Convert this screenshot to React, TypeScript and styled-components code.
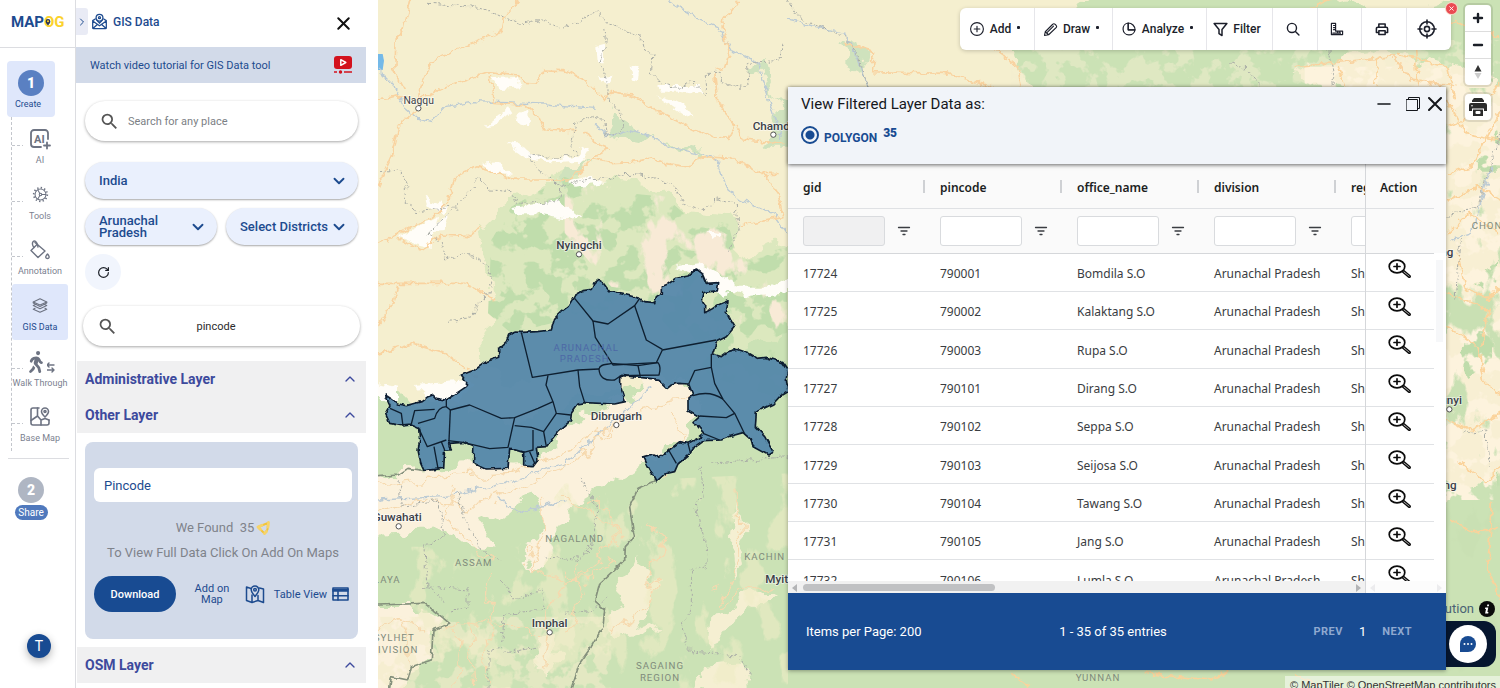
import React from 'react';
import styled, { createGlobalStyle } from 'styled-components';
import { ChevronDown, ChevronUp, ChevronRight, X, RotateCw } from 'lucide-react';
import { FaPersonWalking } from 'react-icons/fa6';
import { MdSearch } from 'react-icons/md';

const navy = '#1d4b8f';
const deep = '#184b92';

const Global = createGlobalStyle`
  * { box-sizing: border-box; }
  body { margin: 0; font-family: Roboto, "Liberation Sans", sans-serif; color: #1b1f27; background: #fff; }
  button, input, select { font-family: inherit; }
  button { cursor: pointer; padding: 0; border: 0; background: none; color: inherit; }
  svg { display: block; flex: none; }
  a { text-decoration: none; color: inherit; }
`;

const Page = styled.div`
  display: flex;
  height: 100vh;
  overflow: hidden;
`;

/* ---------- navigation rail ---------- */
const Rail = styled.nav`
  width: 76px;
  flex: none;
  display: flex;
  flex-direction: column;
  border-right: 1px solid #dcdde1;
`;
const LogoBox = styled.a`
  height: 48px;
  padding: 10px 0 0 11px;
  border-bottom: 1px solid #dcdde1;
`;
const Step = styled.button<{ $active?: boolean }>`
  display: flex;
  flex-direction: column;
  align-items: center;
  width: 48px;
  margin: ${p => (p.$active ? '13px 0 0 7px' : '18px 0 0 7px')};
  padding: ${p => (p.$active ? '9px 6px 6px 0' : '0')};
  border-radius: 4px;
  background: ${p => (p.$active ? '#dfe7fb' : 'transparent')};
  height: ${p => (p.$active ? '56px' : '44px')};
`;
const StepNumber = styled.span<{ $active?: boolean }>`
  width: 26px;
  height: 26px;
  border-radius: 50%;
  margin-left: ${p => (p.$active ? '6px' : '0')};
  background: ${p => (p.$active ? '#5a80c2' : '#afb6c3')};
  color: #fff;
  font-weight: 900;
  font-size: 14px;
  line-height: 26px;
  text-align: center;
`;
const StepText = styled.span`
  font-size: 9px;
  line-height: 17px;
  color: ${navy};
`;
const StepPill = styled.span`
  font-size: 10px;
  line-height: 15px;
  width: 33px;
  margin-top: 2px;
  border-radius: 8px;
  background: #5079bd;
  color: #fff;
  text-align: center;
`;
const NavList = styled.ul`
  list-style: none;
  margin: 0 0 0 11px;
  padding: 0;
  height: 334px;
  display: grid;
  grid-template-rows: repeat(6, 1fr);
  border-left: 1px dashed #c3c6cc;
`;
const NavButton = styled.button<{ $active?: boolean }>`
  width: 56px;
  height: 100%;
  padding-top: 11px;
  display: flex;
  flex-direction: column;
  align-items: center;
  gap: 2px;
  border-radius: 3px;
  font-size: 9px;
  line-height: 16px;
  white-space: nowrap;
  color: ${p => (p.$active ? navy : '#7b8190')};
  background: ${p =>
    p.$active
      ? '#dfe7fb'
      : 'repeating-linear-gradient(90deg, #c3c6cc 0 3px, transparent 3px 5px) left 28px / 11px 1px no-repeat'};
  svg { color: #6d7382; }
`;
const NavIcon = styled.span`
  height: 22px;
  display: grid;
  place-items: center;
`;
const RailLine = styled.hr`
  width: 61px;
  margin: 7px 0 0 8px;
  border: 0;
  border-top: 1px solid #dcdde1;
`;
const Avatar = styled.button`
  width: 24px;
  height: 24px;
  margin: auto auto 30px 27px;
  border-radius: 50%;
  background: ${deep};
  color: #fff;
  font-size: 14px;
  box-shadow: 0 3px 8px rgba(0, 0, 0, 0.3);
`;

/* ---------- data panel ---------- */
const Panel = styled.section`
  width: 302px;
  flex: none;
  padding-right: 12px;
  display: flex;
  flex-direction: column;
  overflow: hidden;
`;
const PanelHead = styled.header`
  height: 47px;
  flex: none;
  display: flex;
  align-items: center;
  padding: 0 12px 4px 0;
`;
const CollapseTab = styled.button`
  width: 12px;
  height: 27px;
  background: #e9ebf5;
  border-radius: 0 3px 3px 0;
  color: ${navy};
`;
const PanelTitle = styled.h1`
  margin: 0 auto 0 5px;
  font-size: 12px;
  font-weight: 500;
  color: ${navy};
`;
const HeadIcon = styled.span`
  margin-left: 3px;
  color: ${navy};
`;
const Close = styled.button`
  padding-top: 3px;
  color: #111;
`;
const Banner = styled.a`
  height: 36px;
  flex: none;
  display: flex;
  align-items: center;
  justify-content: space-between;
  padding: 0 13px 0 14px;
  background: #d2dae9;
  font-size: 11px;
  color: ${navy};
`;
const PanelBody = styled.div`
  display: flex;
  flex-direction: column;
  padding: 18px 8px 0 9px;
`;
const SearchBox = styled.label<{ $wide?: boolean }>`
  height: 40px;
  display: flex;
  align-items: center;
  margin: ${p => (p.$wide ? '16px -2px 15px' : '0 0 21px')};
  padding: 0 14px;
  border-radius: 20px;
  background: #fff;
  box-shadow: 0 1px 3px rgba(0, 0, 0, 0.35);
  color: #555;
  input {
    flex: 1;
    min-width: 0;
    border: 0;
    outline: 0;
    background: none;
    padding: 0 0 0 8px;
    font-size: 11px;
    color: #2b2b2b;
    text-align: ${p => (p.$wide ? 'center' : 'left')};
    padding-right: ${p => (p.$wide ? '40px' : '0')};
  }
  input::placeholder { color: #7c7f85; }
`;
const Pills = styled.div`
  display: grid;
  grid-template-columns: 1fr 1fr;
  gap: 9px;
`;
const PillLabel = styled.label<{ $full?: boolean }>`
  position: relative;
  grid-column: ${p => (p.$full ? '1 / -1' : 'auto')};
  height: 37px;
  display: flex;
  align-items: center;
  justify-content: space-between;
  padding: 0 10px 0 14px;
  border-radius: 19px;
  background: #eaf0fd;
  box-shadow: 0 1px 2px rgba(0, 0, 0, 0.35);
  font-size: 13px;
  font-weight: 500;
  line-height: 12px;
  color: ${navy};
  select {
    position: absolute;
    inset: 0;
    width: 100%;
    opacity: 0;
  }
`;
const Round = styled.button`
  width: 36px;
  height: 36px;
  margin-top: 9px;
  border-radius: 50%;
  background: #f1f5fd;
  display: grid;
  place-items: center;
  color: #1b1f27;
`;
const Accordion = styled.div`
  background: #f0f0f1;
  margin-left: 1px;
`;
const AccordionButton = styled.button`
  width: 100%;
  height: 36px;
  padding: 0 8px;
  display: flex;
  align-items: center;
  justify-content: space-between;
  font-size: 14px;
  font-weight: 700;
  color: #3d4a9d;
`;
const Card = styled.div`
  margin: 9px 8px 8px 9px;
  height: 197px;
  flex: none;
  padding: 26px 6px 0 9px;
  border-radius: 8px;
  background: #d2dae9;
`;
const LayerInput = styled.input`
  display: block;
  width: 100%;
  height: 34px;
  padding: 0 10px;
  border: 0;
  border-radius: 6px;
  background: #fff;
  font-size: 13px;
  color: ${navy};
`;
const Found = styled.p`
  margin: 0;
  display: flex;
  justify-content: center;
  align-items: center;
  gap: 2px;
  height: 25px;
  font-size: 13px;
  color: #7f838b;
  white-space: pre;
  &:first-of-type { margin-top: 13px; }
`;
const CardActions = styled.div`
  display: flex;
  align-items: center;
  justify-content: space-between;
  margin-top: 11px;
  padding-right: 3px;
`;
const Download = styled.button`
  width: 82px;
  height: 36px;
  border-radius: 18px;
  background: ${deep};
  color: #fff;
  font-size: 11px;
  font-weight: 500;
`;
const TextAction = styled.button`
  display: flex;
  align-items: center;
  gap: 5px;
  font-size: 11px;
  line-height: 11px;
  color: ${navy};
`;
const TwoLine = styled.span`
  width: 40px;
  margin: 0 8px 0 7px;
`;

/* ---------- map ---------- */
const MapArea = styled.main`
  position: relative;
  flex: 1;
  min-width: 0;
  overflow: hidden;
  background: #f5efcf;
`;
const MapSvg = styled.svg`
  width: 100%;
  height: 100%;
`;
const Toolbar = styled.div`
  position: absolute;
  top: 8px;
  right: 49px;
  height: 42px;
  display: flex;
  border-radius: 6px;
  background: #fff;
  box-shadow: 0 1px 4px rgba(0, 0, 0, 0.2);
`;
const Tool = styled.button<{ $w: number }>`
  width: ${p => p.$w}px;
  padding-right: 5px;
  display: flex;
  align-items: center;
  justify-content: center;
  gap: 5px;
  font-size: 12px;
  font-weight: 500;
  color: #1c1f2b;
  & + & { border-left: 1px solid #e6e6ea; }
`;
const Caret = styled.span`
  width: 3px;
  height: 3px;
  margin: 0 0 3px 1px;
  border-radius: 1px;
  background: #1c1f2b;
`;
const ToolClose = styled.button`
  position: absolute;
  top: -5px;
  right: -6px;
  width: 11px;
  height: 11px;
  border-radius: 50%;
  background: #ea4b52;
  box-shadow: 0 0 0 1px #f6d5c4;
  color: #fff;
  display: grid;
  place-items: center;
`;
const Controls = styled.div`
  position: absolute;
  top: 5px;
  right: 9px;
  width: 26px;
  display: flex;
  flex-direction: column;
  gap: 9px;
`;
const ControlGroup = styled.div`
  border-radius: 4px;
  background: #fff;
  box-shadow: 0 0 0 2px rgba(0, 0, 0, 0.1);
`;
const Control = styled.button`
  width: 26px;
  height: 26px;
  display: grid;
  place-items: center;
  & + & { border-top: 1px solid #ddd; height: 27px; }
`;
const AttrLink = styled.a`
  position: absolute;
  right: 5px;
  bottom: 71px;
  display: flex;
  align-items: center;
  gap: 5px;
  font-size: 13px;
  line-height: 16px;
  color: #4a6274;
`;
const ChatDock = styled.div`
  position: absolute;
  right: 4px;
  bottom: 21px;
  width: 90px;
  height: 46px;
  padding: 4px 9px;
  border-radius: 12px;
  background: #06162f;
  display: flex;
  justify-content: flex-end;
`;
const ChatButton = styled.button`
  width: 38px;
  height: 38px;
  border-radius: 50%;
  background: #fff;
  display: grid;
  place-items: center;
`;
const Copyright = styled.div`
  position: absolute;
  right: 0;
  bottom: -6px;
  height: 18px;
  padding: 0 4px 0 5px;
  background: rgba(255, 255, 255, 0.5);
  font: 11px/18px "Liberation Sans", sans-serif;
  color: #333;
`;

/* ---------- data window ---------- */
const Win = styled.section`
  position: absolute;
  top: 87px;
  right: 54px;
  width: 658px;
  height: 583px;
  display: flex;
  flex-direction: column;
  background: #fff;
  box-shadow: 0 1px 4px rgba(0, 0, 0, 0.35);
`;
const WinHead = styled.header`
  height: 77px;
  flex: none;
  padding: 8px 4px 0 13px;
  background: #f1f4f9;
  box-shadow: 0 1px 4px rgba(0, 0, 0, 0.6);
  z-index: 1;
`;
const WinTitleRow = styled.div`
  display: flex;
  align-items: center;
  height: 18px;
`;
const WinTitle = styled.h2`
  margin: 0 auto 0 0;
  font-size: 15px;
  font-weight: 400;
  color: #15171c;
`;
const WinButton = styled.button`
  width: 14px;
  height: 18px;
  display: grid;
  place-items: center;
  margin-left: 8px;
  color: #15171c;
  &:first-of-type { margin-right: 7px; }
`;
const RadioLabel = styled.label`
  display: inline-flex;
  align-items: center;
  gap: 5px;
  margin-top: 12px;
  height: 20px;
  font-size: 12px;
  font-weight: 700;
  color: ${deep};
  input {
    appearance: none;
    width: 18px;
    height: 18px;
    margin: 0;
    border: 2px solid ${deep};
    border-radius: 50%;
    background: radial-gradient(circle, ${deep} 0 4px, transparent 5px);
  }
  span { padding-top: 5px; }
  b { padding: 0 0 5px 1px; }
`;
const GridBody = styled.div`
  height: 429px;
  flex: none;
  display: flex;
  overflow: hidden;
  background: #fff;
`;
const GridScroll = styled.div`
  flex: 1;
  min-width: 0;
  overflow: hidden;
`;
const Pinned = styled.div`
  width: 81px;
  height: 429px;
  border-left: 1px solid #d5d7da;
  overflow: hidden;
  background: linear-gradient(#fafafa 0 89px, #fff 89px);
`;
const Table = styled.table<{ $w: number }>`
  width: ${p => p.$w}px;
  table-layout: fixed;
  border-collapse: separate;
  border-spacing: 0;
  font-family: "Noto Sans", "Open Sans", sans-serif;
  font-size: 12px;
  color: #3a3d42;
`;
const Th = styled.th<{ $center?: boolean }>`
  height: 45px;
  padding: ${p => (p.$center ? '2px 0 0 14px' : '2px 0 0 15px')};
  text-align: left;
  font-weight: 600;
  color: #1c1e22;
  background: ${p =>
    p.$center ? '#fafafa' : 'linear-gradient(#cfd1d4, #cfd1d4) 135px 16px / 2px 13px no-repeat #fafafa'};
  border-bottom: 1px solid #dfe1e4;
`;
const FilterCell = styled.td`
  height: 45px;
  padding: 0 0 0 15px;
  background: #fafafa;
  border-bottom: 1px solid #d5d7da;
`;
const FilterWrap = styled.div`
  display: flex;
  align-items: center;
  gap: 12px;
`;
const FilterInput = styled.input`
  width: 82px;
  height: 30px;
  border: 1px solid #d9dbde;
  border-radius: 3px;
  background: #fff;
  &:disabled { background: #f0f0f1; }
`;
const Tr = styled.tr`
  height: 38px;
  &:nth-child(3n) { height: 39px; }
`;
const Td = styled.td<{ $icon?: boolean }>`
  padding: ${p => (p.$icon ? '0 0 8px 22px' : '2px 0 0 15px')};
  white-space: nowrap;
  border-bottom: 1px solid #e0e2e5;
  button { display: block; color: #0c0c0c; }
`;
const BodyClip = styled.div`
  height: 327px;
  overflow: hidden;
`;
const PinnedClip = styled(BodyClip)`
  display: flex;
  align-items: flex-start;
`;
const ScrollTrack = styled.div`
  height: 13px;
  display: flex;
  align-items: center;
  gap: 5px;
  padding: 0 4px;
  background: #f1f1f1;
  i { flex: 1; }
  b { width: 192px; height: 7px; border-radius: 4px; background: #c0c1c3; }
`;
const PinnedTrack = styled(ScrollTrack)`
  background: #fcfcfc;
`;
const VThumb = styled.div`
  width: 7px;
  height: 82px;
  margin: 6px 0 0 2px;
  background: #f6f7f9;
`;
const WinFoot = styled.footer`
  flex: 1;
  display: grid;
  grid-template-columns: 1fr auto 1fr;
  align-items: center;
  padding: 0 34px 0 18px;
  background: ${deep};
  color: #fff;
  font-size: 13px;
`;
const Entries = styled.span`
  padding-left: 8px;
`;
const Pager = styled.div`
  display: flex;
  justify-content: flex-end;
  align-items: center;
  gap: 16px;
  button {
    font-size: 11px;
    font-weight: 700;
    letter-spacing: 0.5px;
    color: #8fa9d0;
  }
`;

/* ---------- icons ---------- */
type IconProps = { w?: number; h?: number; vb?: string; sw?: number; children: React.ReactNode };
const Icon = ({ w = 20, h, vb = '0 0 20 20', sw = 1.4, children }: IconProps) => (
  <svg width={w} height={h ?? w} viewBox={vb} fill="none" stroke="currentColor" strokeWidth={sw} strokeLinecap="round" strokeLinejoin="round" aria-hidden="true">
    {children}
  </svg>
);

const Logo = () => (
  <svg width="56" height="24" viewBox="0 0 56 24" role="img" aria-label="MAPOG">
    <text y="17" fontFamily="Roboto, sans-serif" fontWeight="700" fontSize="15" fill={navy}>
      MAP<tspan fill="#fbd22c">OG</tspan>
    </text>
    <path d="M37 15.500c-1.600-2.200-2.400-2.900-2.400-4.100a2.400 2.400 0 0 1 4.800 0c0 1.200-.8 1.900-2.400 4.100z" fill="#2d3550" />
    <circle cx="37" cy="11.300" r="1" fill="#fbd22c" />
  </svg>
);
const AiIcon = () => (
  <Icon w={22} vb="0 0 22 22" sw={1.800}>
    <path d="M19 11V5a3 3 0 0 0-3-3H5a3 3 0 0 0-3 3v11a3 3 0 0 0 3 3h7" />
    <path d="M18 14.500v6M15 17.500h6" />
    <text x="5" y="14.500" fontSize="11" fontWeight="700" fill="currentColor" stroke="none" fontFamily="Roboto">AI</text>
  </Icon>
);
const GearIcon = () => (
  <Icon w={17} sw={1.200}>
    <circle cx="10" cy="10" r="6.400" />
    <circle cx="10" cy="10" r="8" strokeDasharray="1.600 2.588" strokeWidth="2" strokeLinecap="butt" />
    <circle cx="10" cy="10" r="1.500" />
    <path d="M11.500 10h4.600M9.200 8.700 6.900 4.700M9.200 11.300l-2.300 4" />
  </Icon>
);
const BucketIcon = () => (
  <Icon w={22} vb="0 0 22 22" sw={1.400}>
    <path d="M6 3.500 16 12l-7 6.500L2 11.500 8 5.500" />
    <path d="M5 8.500C3.500 6.500 3 4 4.200 2.500 5.500 1.200 7.500 2.500 8.500 5.500L9 8" />
    <path d="M18.500 15c1.300 1.500 1.700 2.200 1.700 3.100a1.800 1.800 0 0 1-3.500 0c0-.9.500-1.600 1.800-3.100z" />
  </Icon>
);
const LayersIcon = () => (
  <Icon w={18} sw={1.200}>
    <path d="M10 2 17.500 5.500 10 9 2.500 5.500z" />
    <path d="M4.500 8.500 2.500 9.500 10 13l7.500-3.500-2-1M4.500 12.500l-2 1L10 17l7.500-3.500-2-1M2.500 5.500v1.200L10 10.500l7.500-3.800V5.500" />
  </Icon>
);
const WalkWrap = styled.span`
  display: flex;
  align-items: flex-end;
`;
const WalkIcon = () => (
  <WalkWrap>
    <FaPersonWalking size={22} />
    <Icon w={8} h={12} vb="0 0 8 12" sw={1.400}>
      <path d="M0 4h7M2 2 0 4l2 2M0 9h7M5 7l2 2-2 2" />
    </Icon>
  </WalkWrap>
);
const BaseIcon = () => (
  <Icon w={22} vb="0 0 22 22" sw={1.600}>
    <path d="M10 2H4a2 2 0 0 0-2 2v13a2 2 0 0 0 2 2h14a2 2 0 0 0 2-2v-3" />
    <path d="M8.500 2v8L2 14.500M8.500 10l3.500 4v5M12 14l4-1.500 4 1.500" />
    <path d="M16 11c-2.500-2.500-3.500-3.800-3.500-5.500a3.500 3.500 0 0 1 7 0C19.500 7.200 18.500 8.500 16 11z" />
    <circle cx="16" cy="5.500" r="1" />
  </Icon>
);
const GisIcon = () => (
  <Icon w={17} h={17} sw={1.500}>
    <path d="M5 7 2 9v8.500a1 1 0 0 0 1 1h14a1 1 0 0 0 1-1V9l-3-2M2 9.500l8 5.500 8-5.500M2.500 18l5-4.500M17.500 18l-5-4.500" />
    <circle cx="10" cy="5.500" r="4" />
    <circle cx="10" cy="5.500" r="1.200" />
    <path d="M7 8.500 10 12l3-3.500" />
  </Icon>
);
const VideoIcon = () => (
  <svg width="20" height="20" viewBox="0 0 20 20" aria-hidden="true">
    <rect x="1" y="1" width="18" height="13" rx="3" fill="#d3121d" />
    <path d="M7.800 4.700 12.800 7.500 7.800 10.300z" fill="#d3121d" stroke="#fff" strokeWidth="1.500" strokeLinejoin="round" />
    <path d="M1 17h3M6 17h3M11 17h8" stroke="#d3121d" strokeWidth="1.300" />
    <circle cx="7.500" cy="17" r="1.700" fill="#d3121d" />
  </svg>
);
const PolygonIcon = () => (
  <Icon w={14} vb="0 0 14 14" sw={2}>
    <path d="M12 2 2 6l6.500 6.500 3-4z" stroke="#f2c43a" />
    <path d="M6 4.200 2 6 4.500 8.500M12.500 1.500 12 6M8.500 12.500l2-2" stroke="#f6d46a" strokeWidth="2.800" />
  </Icon>
);
const AddMapIcon = () => (
  <Icon w={20} sw={1.500}>
    <path d="M6 4.500 1.500 3v13.500L7 18.500l6-2 5.500 2V5L14.500 4M7 11v7.500M13 11.500v5" />
    <path d="M10 12.500C7.500 9.500 6.200 8 6.200 5.800a3.800 3.800 0 0 1 7.600 0c0 2.200-1.300 3.700-3.800 6.700z" />
    <circle cx="10" cy="5.800" r="1.300" />
  </Icon>
);
const TableIcon = () => (
  <Icon w={17} h={14} vb="0 0 17 14" sw={1.600}>
    <rect x="1" y="1" width="15" height="12" />
    <path d="M1 2.500h15M1 4h15M6 5v8M1 8.800h15" />
  </Icon>
);
const ZoomIcon = () => (
  <Icon w={24} h={20} vb="0 0 24 20" sw={1.700}>
    <ellipse cx="9" cy="7.500" rx="7.800" ry="6.400" />
    <path d="M9 4.800v5.400M6 7.500h6" />
    <path d="M14.300 12.800 15.800 11.500l6.200 5.200c.8.700-.2 2.200-1.300 1.400z" fill="#fff" strokeWidth="1.400" />
  </Icon>
);
const GridFilterIcon = () => (
  <Icon w={14} vb="0 0 14 14" sw={1.300}>
    <path d="M1.500 3.500h11M4 7h6M6 10.500h2" />
  </Icon>
);

/* ---------- map drawing ---------- */
const stateOutline =
  'M22 435 45 450 58 462 85 467 130 455 150 440 165 435 175 445 205 450 235 430 265 410 266 395 250 375 290 360 325 335 362 322 362 295 385 275 392 255 412 246 430 247 480 245 520 240 530 205 550 185 570 170 590 137 615 122 640 118 648 98 660 88 675 98 695 125 735 132 785 145 800 155 830 158 835 140 850 130 850 110 870 102 895 85 930 78 955 57 972 70 985 100 1022 98 1018 122 975 128 970 150 980 165 980 188 1000 178 1020 165 1050 152 1045 185 1058 210 1070 230 1045 260 1015 275 1003 312 1030 320 1050 305 1075 298 1110 310 1135 325 1165 322 1215 338 1230 360 1225 385 1230 425 1205 440 1185 462 1135 485 1132 530 1160 560 1185 605 1170 615 1125 590 1120 570 1095 548 1060 558 1030 570 975 572 950 590 935 612 900 642 890 665 860 672 835 695 810 650 797 620 825 612 845 622 880 595 905 575 930 580 960 565 978 550 960 530 945 518 965 500 930 480 930 440 945 435 932 402 900 400 880 405 868 415 840 388 785 382 728 376 728 415 742 455 710 462 620 458 600 462 580 490 578 512 540 545 505 590 475 592 480 630 465 650 437 648 437 607 395 595 390 655 325 657 287 640 287 590 255 577 215 580 220 600 200 600 197 655 138 662 128 640 120 600 125 570 122 535 100 525 75 528 35 520 22 490 36 465Z';
const districtLines = [
  'M590 145 645 213 690 222 770 167 785 145', 'M645 213 652 262 705 345 835 338 853 300 1015 270',
  'M770 167 805 270 853 298', 'M430 247 463 382 600 360 663 357', 'M663 357C665 340 690 345 700 340L780 347 840 338Q850 350 843 375L728 377 710 390Q665 395 663 357',
  'M780 347 787 380', 'M510 376 504 405 525 455 535 490 578 495', 'M600 360 605 410 620 458', 'M205 450V470Q180 470 170 505L120 520',
  'M205 470 217 480 275 465 370 505 410 503 480 475 525 455', 'M217 480 213 572', 'M210 572 255 577 335 596 390 592 410 503',
  'M410 527 460 532 497 545 535 490', 'M437 607 465 600V540', 'M497 545 505 590', 'M36 475 70 490 75 528', 'M75 524 100 522 110 482 170 478',
  'M122 535 148 590 205 570M168 590 180 655M190 575 200 600', 'M1000 312 1000 352 950 362 932 402', 'M1000 352 1010 400 1035 448 1070 490 1100 552',
  'M945 437C980 425 1010 430 1035 448', 'M965 498 1045 503 1070 490', 'M975 550 1025 570', 'M870 597 895 640M930 580 937 608M455 605 470 640',
];
const roads = [
  'M95 0 75 90 55 110 50 210 80 270', 'M420 0 380 50 372 95 250 140 160 185 125 260 121 325 60 380 40 470 0 560', 'M0 300 70 290 121 300 200 260 330 215 420 225 440 250 475 252 500 210 560 212 620 240 680 300',
  'M340 225 345 310 440 315 485 350 500 390 590 395', 'M680 300 700 275 760 285 850 340 1000 410 1050 415 1070 375 1020 310 1010 220', 'M620 390 650 430 690 445 640 475 580 540 420 540 300 500 230 530 215 600 160 655 0 730',
  'M640 475 700 488 760 485 830 475 860 490 930 500 980 470 1060 475 1150 520 1205 520', 'M1080 0 1030 70 1055 160 1040 205 1010 210', 'M1080 375 1095 420 1220 430', 'M60 715 130 750 190 705 270 710 310 680',
  'M0 850 260 850 350 900', 'M60 860 40 920 0 980', 'M0 1060 100 1030 200 1060 300 1130', 'M1160 520 1200 580 1215 650 1085 675', 'M1400 130 1490 155 1480 215 1700 220 1860 265', 'M1850 150 1920 200 1930 265', 'M2750 200 3050 170 3100 240 3240 260',
];
const plainRoads = [
  'M0 1450 200 1430 400 1420 600 1340 740 1240 960 1200', 'M0 1530 130 1500 300 1520 460 1440 620 1380 700 1280', 'M230 1470 210 1560 300 1640 340 1690', 'M490 1490 500 1590 440 1690 500 1720 560 1760', 'M540 1480 700 1560 710 1620 640 1700 560 1750 500 1840 515 1890 500 2000',
  'M860 1440 900 1290 880 1250', 'M215 1870 330 1880 340 2040', 'M350 1740 330 1860 360 1900 490 1900', 'M240 1880 230 2064M280 1870 290 2064', 'M620 1500 700 1520 720 1640', 'M600 1700 620 1800 560 1900', 'M1000 1830 1060 1790 1180 1750', 'M0 1900 90 1850 150 1900', 'M80 1860 100 1960', 'M1080 1480 1090 1680 1000 1820',
  'M820 1570 870 1610 830 1720 800 1830 700 1880', 'M560 1730 640 1720 690 1690',
];
const eastRoads = [
  'M3210 300 3260 400 3366 420', 'M3366 330 3280 500 3210 520', 'M3366 250 3300 340 3210 380', 'M3210 600 3300 560 3366 600', 'M3210 700 3270 640 3366 700', 'M3240 760 3260 860 3330 900 3366 860', 'M3210 980 3300 1040 3320 1150 3366 1180', 'M3310 1040 3330 930 3210 880',
  'M3210 1260 3280 1290 3366 1240', 'M3240 1380 3320 1450 3366 1400', 'M3340 1500 3330 1700 3366 1800', 'M3220 1560 3300 1600 3366 1580', 'M3210 60 3366 110', 'M2780 30 2860 0', 'M3060 160 3210 200 3230 300', 'M2880 200 2900 260M3000 170 2990 260M3110 150 3120 260', 'M2300 2020 2500 2040 2560 2010M2750 2020 2840 2064M1900 2020 1960 2064',
];
const provinceLines = [
  'M150 10 240 15 330 30 430 75 490 60 550 85 610 60 655 35 690 70 760 100 790 110 800 150 825 160 820 220 840 245 900 265 940 240 985 290 985 220 1030 220 1030 250 1090 265 1110 250 1105 190 1200 185 1215 125',
  'M680 80 685 120 665 190 690 250 690 300 715 320 740 370 725 400 685 410 680 360 640 350 590 370 580 440 600 465 530 475 450 460 480 510 550 560 600 545 680 535 770 520 880 550 920 610 970 630 1020 600 1075 615 1080 690 1050 760',
  'M0 515 60 510 90 550 75 590 115 635 235 620 300 535 340 570 400 575 420 610 540 605 550 560', 'M235 625 150 700 190 730 200 780 260 760 330 790 340 860 280 950 210 970',
  'M1227 0 1260 50 1350 90 1400 110 1440 170 1470 265', 'M2560 190 2600 200 2650 260M2850 150 2870 260', 'M60 1440 70 1520 180 1500 200 1600 140 1640 150 1760 200 1810', 'M240 1480 260 1560 310 1650 370 1680M370 1740 410 1800 440 1790 490 1770 500 1830 380 1840 370 1940 330 1950 330 2064',
  'M380 1960 480 1940M560 1840 650 1830 690 1790', 'M970 1400 975 1490 950 1510 980 1620 985 1700 940 1710 940 1840 910 1870 930 1950 1080 1970 1120 2030', 'M1000 1390 1230 1370', 'M3366 400 3300 620 3200 650M3250 720 3230 900M3260 1300 3320 1290 3340 1400', 'M140 1760 270 1770 270 1820 210 1840', 'M610 1430 660 1530 640 1640 590 1680 500 1670',
];
const rivers = [
  'M0 210 60 270 80 320 121 355 160 365 200 320 290 305 500 312 650 325', 'M870 0 960 55 1020 80 1060 150 1140 190 1180 320 1210 420', 'M650 370 690 410 760 390 820 410 870 440 1010 470 1050 570 1090 600 1190 645 1230 700', 'M1230 60 1400 100 1440 180 1470 265', 'M0 1500 200 1490 380 1450 560 1390 650 1310 760 1220 820 1160',
  'M3340 500 3280 700 3220 720', 'M560 1500 420 1540 360 1490',
];
const Cream = '#f5efcf';
const Sand = '#fbf1dc';
const Green = '#cbe2b5';

type Anchor = 'start' | 'middle' | 'end';
const Place = ({ x, y, t, cx, cy, bold, anchor = 'middle' }: { x: number; y: number; t: string; cx?: number; cy?: number; bold?: boolean; anchor?: Anchor }) => (
  <g>
    {cx !== undefined && <circle cx={cx} cy={cy} r="8" fill="#fff" stroke="#555" strokeWidth="3" />}
    <text x={x} y={y} textAnchor={anchor} fontSize={bold ? 35 : 31} fontWeight={bold ? 500 : 400} fill="#3c3f48" stroke="#fff" strokeOpacity=".6" strokeWidth="5" paintOrder="stroke">{t}</text>
  </g>
);
const Region = ({ x, y, t, anchor = 'middle', fill = '#7f8b7c' }: { x: number; y: number; t: string; anchor?: Anchor; fill?: string }) => (
  <text x={x} y={y} textAnchor={anchor} fontSize="29" letterSpacing="3" fill={fill}>{t}</text>
);

const MapDrawing = () => (
  <MapSvg viewBox="0 0 3366 2064" preserveAspectRatio="xMinYMin slice" role="img" aria-label="Map of Arunachal Pradesh" fontFamily="Roboto, sans-serif">
    <defs>
      <filter id="rough" x="-5%" y="-5%" width="110%" height="110%">
        <feTurbulence type="fractalNoise" baseFrequency="0.014" numOctaves="4" seed="4" />
        <feDisplacementMap in="SourceGraphic" scale="90" xChannelSelector="R" yChannelSelector="G" />
      </filter>
      <filter id="wobble" x="-5%" y="-5%" width="110%" height="110%">
        <feTurbulence type="fractalNoise" baseFrequency="0.04" numOctaves="3" seed="9" />
        <feDisplacementMap in="SourceGraphic" scale="26" xChannelSelector="R" yChannelSelector="G" />
      </filter>
      <filter id="jag" x="-5%" y="-5%" width="110%" height="110%">
        <feTurbulence type="fractalNoise" baseFrequency="0.05" numOctaves="2" seed="2" />
        <feDisplacementMap in="SourceGraphic" scale="12" xChannelSelector="R" yChannelSelector="G" />
      </filter>
      <filter id="mottle" x="0" y="0" width="100%" height="100%">
        <feTurbulence type="fractalNoise" baseFrequency="0.016" numOctaves="4" seed="11" />
        <feColorMatrix values="0 0 0 0 0  0 0 0 0 0  0 0 0 0 0  14 0 0 0 -6.800" result="m" />
        <feComposite in="SourceGraphic" in2="m" operator="in" />
      </filter>
      <filter id="sparse" x="0" y="0" width="100%" height="100%">
        <feTurbulence type="fractalNoise" baseFrequency="0.010 0.006" numOctaves="5" seed="23" />
        <feColorMatrix values="0 0 0 0 0  0 0 0 0 0  0 0 0 0 0  0 14 0 0 -8" result="m" />
        <feComposite in="SourceGraphic" in2="m" operator="in" />
      </filter>
    </defs>
    <rect width="3366" height="2064" fill={Cream} />
    <g filter="url(#rough)">
      <path d="M300 700 400 600 560 520 680 550 860 570 930 640 1060 650 1090 760 1160 740 1320 700V1200L700 1100 380 1150 300 1040 350 880Z" fill="#dce8be" />
      <path d="M-60 1180 100 1200 400 1260 700 1180 1000 1100 1300 960H3450V2150H-60Z" fill={Green} />
      <path d="M1900 130 2200-60H2820L3000 60 3450-60V300H1950Z" fill={Green} />
      <path d="M-60 1430 150 1410 470 1390 600 1240 780 1180 800 1130 950 1150 970 1250 880 1330 800 1380 740 1420 600 1500 490 1700 430 1690 500 1570 470 1480 300 1560 350 1640 250 1630 200 1590-60 1600Z" fill={Sand} />
      <path d="M-60 1815H120L215 1870 165 1890 160 1980 100 2000 60 2100H-60Z" fill={Sand} />
      <path d="M2740 230 2840 180 3000 150 3250 200 3460 300V1400L3200 1500V300Z" fill="#f8efd3" />
      <path d="M780 1650 830 1740 790 1860 840 1890 700 1910 690 1860ZM1000 1850 1150 1770 1200 1780 1060 1870 990 1960ZM1080 1500 1110 1690 1070 1730 1060 1640ZM980 2000 1100 1990 1110 2080H950ZM480 1900 540 1900 530 1990 490 2030Z" fill="#f5efd2" />
      <path d="M3250 1050 3320 980 3340 1100 3280 1140ZM3300 500 3366 400 3380 500ZM3280 850 3366 780 3366 850ZM3330 1480 3366 1500V1400Z" fill="#bfdcab" />
      <path d="M1130 190 1160 180 1190 300 1230 320V440L1160 440 1200 320ZM1380 110 1450 130 1470 200 1430 220ZM700 330 760 370 830 410 780 430 680 410ZM850 430 980 450 960 470ZM560 510 640 480 600 530 550 560Z" fill="#cfe2bd" />
    </g>
    <path d="M400 620 560 530 650 570 860 590 930 650 1050 670 1080 780 1227 740V1200L1000 1130 800 900 400 1000 330 940 340 720Z" fill="#c0ddac" filter="url(#mottle)" />
    <path d="M560 570 700 550 900 600 1040 700 1227 780V1050L960 900 700 860 560 700Z" fill="#f8ead6" filter="url(#sparse)" />
    <path d="M0 1640H420L560 1450 800 1440 1230 1420V2064H220L160 1900 0 1800Z" fill="#efedc6" filter="url(#sparse)" opacity=".6" />
    <path d="M0 1850H700V2064H0Z" fill="#f3edcb" filter="url(#mottle)" opacity=".6" />
    <path d="M1900 120H3366V264H1900Z" fill="#f4eed0" filter="url(#mottle)" opacity=".5" />
    <path d="M2780 200H3366V1500H3200V264H2780Z" fill="#fdf3dd" filter="url(#mottle)" />
    <path d="M3200 264H3366V2064H3200Z" fill="#c9e0b3" filter="url(#sparse)" />
    <g fill="#fffdf8" filter="url(#wobble)">
      <path d="M345 235 420 230 430 265 370 270ZM320 380 390 325 400 340 350 375ZM415 350 450 330 455 380 425 370ZM380 425 420 430 460 460 520 480 600 470 615 440 635 450 615 485 520 490 440 470ZM305 495 360 490 405 525 350 515ZM655 140 675 135 680 190 660 190ZM655 235 710 230 690 250ZM755 200 785 195 780 240 765 235ZM835 255 880 255 960 255 980 285 900 275 845 275ZM840 290 910 310 950 355 920 345ZM140 590 215 625 200 640 150 620ZM60 710 180 650 160 740 110 730ZM400 625 540 600 610 650 560 655 470 640 410 640ZM570 545 640 530 680 550 590 560ZM150 695 215 640 200 690Z" />
      <path d="M110 1155 270 1140 285 1150 240 1205 160 1200ZM0 1150 60 1160 60 1220 0 1190ZM890 800 960 790 1020 820 1080 860 1180 860 1230 830V880L1120 890 1050 870 1040 900 990 850 960 820ZM980 690 1030 700 1010 720Z" />
    </g>
    <path d="M0 162h14l4 20-4 28H0z" fill="#74b9e8" />
    <g fill="none" strokeLinejoin="round">
      <g stroke="#bccbd4" strokeWidth="4" filter="url(#wobble)">{rivers.map(d => <path key={d} d={d} />)}</g>
      <g stroke="#f9d3a0" strokeWidth="5" filter="url(#wobble)">{roads.map(d => <path key={d} d={d} />)}</g>
      <g stroke="#f6d9ae" strokeWidth="4" filter="url(#rough)">{plainRoads.map(d => <path key={d} d={d} />)}</g>
      <g stroke="#fbd39b" strokeWidth="5" filter="url(#wobble)">{eastRoads.map(d => <path key={d} d={d} />)}</g>
      <g stroke="#a9aca6" strokeWidth="3" strokeDasharray="9 5" filter="url(#wobble)">{provinceLines.map(d => <path key={d} d={d} />)}</g>
      <g stroke="#85917d" strokeWidth="5" filter="url(#jag)">
        <path d="M835 1440 780 1465 755 1520 765 1590 770 1610 742 1640 740 1680 665 1750 650 1805 680 1830 675 1880 640 1940 605 1990 580 2064" />
        <path d="M0 1815 140 1810 215 1870 165 1890 160 1980 100 2000 90 2040 40 2030 35 2064" />
        <path d="M0 1430 60 1425 90 1405 140 1412" />
      </g>
    </g>
    <g transform="translate(0 750)" stroke="#0e1f30" strokeLinejoin="round" strokeWidth="5">
      <path d={stateOutline} fill="#5385aa" fillOpacity=".93" filter="url(#jag)" />
      <g fill="none" strokeWidth="4">{districtLines.map(d => <path key={d} d={d} />)}</g>
    </g>
    <Region x={625} y={1052} t="ARUNACHAL" fill="#4d68a6" />
    <Region x={620} y={1086} t="PRADESH" fill="#4d68a6" />
    <Place x={122} y={312} t="Nagqu" cx={121} cy={325} />
    <Place x={1124} y={389} t="Chamdo" cx={1186} cy={404} bold anchor="start" />
    <Place x={603} y={748} t="Nyingchi" cx={603} cy={763} bold />
    <Place x={715} y={1261} t="Dibrugarh" cx={715} cy={1275} bold />
    <Place x={131} y={1564} t="Guwahati" cx={62} cy={1579} bold anchor="end" />
    <Place x={1162} y={1748} t="Myitkyina" bold anchor="start" />
    <Place x={515} y={1881} t="Imphal" cx={515} cy={1897} bold />
    <Place x={3226} y={767} t="Chongqing" bold anchor="end" />
    <Place x={3252} y={1212} t="Zunyi" cx={3214} cy={1228} bold anchor="end" />
    <Place x={3236} y={1466} t="Guiyang" bold anchor="end" />
    <Region x={590} y={1626} t="NAGALAND" />
    <Region x={287} y={1698} t="ASSAM" />
    <Region x={68} y={1750} t="MEGHALAYA" anchor="end" />
    <Region x={1160} y={1679} t="KACHIN" />
    <Region x={110} y={1924} t="SYLHET" anchor="end" />
    <Region x={121} y={1959} t="DIVISION" anchor="end" />
    <Region x={846} y={2007} t="SAGAING" />
    <Region x={846} y={2042} t="REGION" />
    <Region x={2160} y={2042} t="YUNNAN" />
    <Region x={3281} y={686} t="CHONGQING" anchor="start" />
  </MapSvg>
);

/* ---------- content ---------- */
const navItems = [
  { label: 'AI', icon: <AiIcon /> },
  { label: 'Tools', icon: <GearIcon /> },
  { label: 'Annotation', icon: <BucketIcon /> },
  { label: 'GIS Data', icon: <LayersIcon />, active: true },
  { label: 'Walk Through', icon: <WalkIcon /> },
  { label: 'Base Map', icon: <BaseIcon /> },
];
const columns = ['gid', 'pincode', 'office_name', 'division', 'region'];
const rows = [
  ['17724', '790001', 'Bomdila S.O'],
  ['17725', '790002', 'Kalaktang S.O'],
  ['17726', '790003', 'Rupa S.O'],
  ['17727', '790101', 'Dirang S.O'],
  ['17728', '790102', 'Seppa S.O'],
  ['17729', '790103', 'Seijosa S.O'],
  ['17730', '790104', 'Tawang S.O'],
  ['17731', '790105', 'Jang S.O'],
  ['17732', '790106', 'Lumla S.O'],
].map(r => [...r, 'Arunachal Pradesh', 'Shillong']);

const PillSelect = ({ name, value, full }: { name: string; value: string; full?: boolean }) => (
  <PillLabel $full={full}>
    <span>{value}</span>
    <ChevronDown size={18} strokeWidth={2.500} />
    <select aria-label={name} defaultValue={value}>
      <option>{value}</option>
    </select>
  </PillLabel>
);
const Arrow = ({ left, pale }: { left?: boolean; pale?: boolean }) => (
  <svg width="6" height="8" viewBox="0 0 6 8" aria-hidden="true">
    <path d={left ? 'M5 0v8L0 4z' : 'M1 0v8l5-4z'} fill={pale ? '#ececee' : '#b3b4b6'} />
  </svg>
);

export default function App() {
  return (
    <Page>
      <Global />
      <Rail>
        <LogoBox href="#home"><Logo /></LogoBox>
        <Step $active>
          <StepNumber $active>1</StepNumber>
          <StepText>Create</StepText>
        </Step>
        <NavList>
          {navItems.map(n => (
            <li key={n.label}>
              <NavButton $active={n.active}>
                <NavIcon>{n.icon}</NavIcon>
                {n.label}
              </NavButton>
            </li>
          ))}
        </NavList>
        <RailLine />
        <Step>
          <StepNumber>2</StepNumber>
          <StepPill>Share</StepPill>
        </Step>
        <Avatar aria-label="Account">T</Avatar>
      </Rail>

      <Panel>
        <PanelHead>
          <CollapseTab aria-label="Collapse"><ChevronRight size={12} /></CollapseTab>
          <HeadIcon><GisIcon /></HeadIcon>
          <PanelTitle>GIS Data</PanelTitle>
          <Close aria-label="Close panel"><X size={21} strokeWidth={2.300} /></Close>
        </PanelHead>
        <Banner href="#tutorial">Watch video tutorial for GIS Data tool<VideoIcon /></Banner>
        <PanelBody>
          <SearchBox>
            <MdSearch size={21} />
            <input placeholder="Search for any place" aria-label="Search for any place" />
          </SearchBox>
          <Pills>
            <PillSelect name="Country" value="India" full />
            <PillSelect name="State" value="Arunachal Pradesh" />
            <PillSelect name="District" value="Select Districts" />
          </Pills>
          <Round aria-label="Refresh"><RotateCw size={13} strokeWidth={2.200} /></Round>
          <SearchBox $wide>
            <MdSearch size={21} />
            <input defaultValue="pincode" aria-label="Search layers" />
          </SearchBox>
        </PanelBody>
        <Accordion>
          <AccordionButton>Administrative Layer<ChevronUp size={16} strokeWidth={2} /></AccordionButton>
          <AccordionButton>Other Layer<ChevronUp size={16} strokeWidth={2} /></AccordionButton>
        </Accordion>
        <Card>
          <LayerInput defaultValue="Pincode" aria-label="Layer" />
          <Found>{'We Found  35'}<PolygonIcon /></Found>
          <Found>To View Full Data Click On Add On Maps</Found>
          <CardActions>
            <Download>Download</Download>
            <TextAction><TwoLine>Add on Map</TwoLine><AddMapIcon /></TextAction>
            <TextAction>Table View<TableIcon /></TextAction>
          </CardActions>
        </Card>
        <Accordion>
          <AccordionButton>OSM Layer<ChevronUp size={16} strokeWidth={2} /></AccordionButton>
        </Accordion>
      </Panel>

      <MapArea>
        <MapDrawing />
        <Toolbar>
          <Tool $w={74}>
            <Icon w={16} sw={1.400}><circle cx="10" cy="10" r="8" /><path d="M10 6.500v7M6.500 10h7" /></Icon>
            Add<Caret />
          </Tool>
          <Tool $w={78}>
            <Icon w={15} sw={1.500}><path d="M2 18l1-5L13 3a2 2 0 0 1 3 0l1.500 1.500a2 2 0 0 1 0 3L7.500 17zM3 13l4.500 4M6 13.500 14 5.500" /></Icon>
            Draw<Caret />
          </Tool>
          <Tool $w={94}>
            <Icon w={16} sw={1.500}><path d="M9 2.500a7.500 7.500 0 1 0 8.500 8.500H9z" /><path d="M9 2.500V11h8.500A8.500 8.500 0 0 0 9 2.500z" /></Icon>
            Analyze<Caret />
          </Tool>
          <Tool $w={66}>
            <Icon w={15} sw={2}><path d="M1.500 2h17L12 10v8l-4-2.500V10z" /></Icon>
            Filter
          </Tool>
          <Tool $w={45} aria-label="Search"><Icon w={14} sw={2}><circle cx="8.500" cy="8.500" r="6.500" /><path d="m13.500 13.500 5 5" /></Icon></Tool>
          <Tool $w={44} aria-label="Measure">
            <Icon w={14} sw={1.700}><path d="M2 2h6v11h10v5H2zM8 5H5M8 8H5M8 11H5M11 13v2M14 13v2M4 16h11" /></Icon>
          </Tool>
          <Tool $w={45} aria-label="Print">
            <Icon w={14} sw={2.200}><path d="M5.500 7V3h9v4M5 15H2V9.500A2 2 0 0 1 4 7.500h12a2 2 0 0 1 2 2V15h-3" /><path d="M5.500 12.500h9V18h-9z" /></Icon>
          </Tool>
          <Tool $w={45} aria-label="Locate me">
            <Icon w={20} sw={1.600}><circle cx="10" cy="10" r="7.300" /><circle cx="10" cy="10" r="2.600" /><path d="M10 1v4M10 15v4M1 10h4M15 10h4" /></Icon>
          </Tool>
          <ToolClose aria-label="Hide toolbar"><X size={7} strokeWidth={3} /></ToolClose>
        </Toolbar>
        <Controls>
          <ControlGroup>
            <Control aria-label="Zoom in"><Icon w={12} vb="0 0 12 12" sw={2.400}><path d="M6 2v8M2 6h8" /></Icon></Control>
            <Control aria-label="Zoom out"><Icon w={12} vb="0 0 12 12" sw={2.400}><path d="M2 6h8" /></Icon></Control>
            <Control aria-label="Reset north">
              <svg width="10" height="16" viewBox="0 0 10 16"><path d="M5 1 8.500 7.500h-7z" fill="#333" /><path d="M5 15 1.500 9h7z" fill="#ccc" /></svg>
            </Control>
          </ControlGroup>
          <ControlGroup>
            <Control aria-label="Print map">
              <svg width="20" height="20" viewBox="0 0 20 20">
                <path d="M6 1h8l2 2.500v1.500H4V3.500zM3 6h14a2 2 0 0 1 2 2v6h-3v-2.500H4V14H1V8a2 2 0 0 1 2-2z" fill="#2b2b2b" />
                <path d="M5 12.500h10V19H5z" fill="#2b2b2b" /><rect x="7.500" y="14" width="5" height="3" rx="1" fill="#fff" /><circle cx="4" cy="8.700" r=".8" fill="#fff" />
              </svg>
            </Control>
          </ControlGroup>
        </Controls>
        <AttrLink href="#attribution">
          Toggle Attribution
          <svg width="16" height="16" viewBox="0 0 16 16"><circle cx="8" cy="8" r="8" fill="#0b0b0b" /><path d="M8.300 3.500h1.800l-.3 1.700H8zM6.300 6.500h3L8.400 11h1l-.2 1.400H6.100L7 8H6z" fill="#fff" /></svg>
        </AttrLink>
        <ChatDock>
          <ChatButton aria-label="Chat">
            <svg width="18" height="18" viewBox="0 0 18 18"><path d="M9 1a8 8 0 1 1 0 16H1V9a8 8 0 0 1 8-8z" fill={deep} /><circle cx="5.500" cy="9" r="1" fill="#fff" /><circle cx="9" cy="9" r="1" fill="#fff" /><circle cx="12.500" cy="9" r="1" fill="#fff" /></svg>
          </ChatButton>
        </ChatDock>
        <Copyright><a href="#maptiler">© MapTiler</a> <a href="#osm">© OpenStreetMap contributors</a></Copyright>

        <Win>
          <WinHead>
            <WinTitleRow>
              <WinTitle>View Filtered Layer Data as:</WinTitle>
              <WinButton aria-label="Minimize"><Icon w={14} vb="0 0 14 14" sw={1.600}><path d="M1 7h12" /></Icon></WinButton>
              <WinButton aria-label="Maximize"><Icon w={14} vb="0 0 14 14" sw={1}><path d="M.5 2.500h11v11H.5zM2.500 2V.500h11v11H12" /></Icon></WinButton>
              <WinButton aria-label="Close window"><Icon w={14} vb="0 0 14 14" sw={2}><path d="M1 1l12 12M13 1 1 13" /></Icon></WinButton>
            </WinTitleRow>
            <RadioLabel>
              <input type="radio" name="geometry" defaultChecked />
              <span>POLYGON</span><b>35</b>
            </RadioLabel>
          </WinHead>
          <GridBody>
            <GridScroll>
              <Table $w={685}>
                <thead>
                  <tr>{columns.map(c => <Th key={c}>{c}</Th>)}</tr>
                  <tr>
                    {columns.map((c, i) => (
                      <FilterCell key={c}>
                        <FilterWrap>
                          <FilterInput disabled={i === 0} aria-label={`Filter ${c}`} />
                          <GridFilterIcon />
                        </FilterWrap>
                      </FilterCell>
                    ))}
                  </tr>
                </thead>
              </Table>
              <BodyClip>
                <Table $w={685}>
                  <tbody>
                    {rows.map(r => (
                      <Tr key={r[0]}>{r.map((v, i) => <Td key={i}>{v}</Td>)}</Tr>
                    ))}
                  </tbody>
                </Table>
              </BodyClip>
              <ScrollTrack><Arrow left /><b /><i /><Arrow /></ScrollTrack>
            </GridScroll>
            <Pinned>
              <Table $w={68}>
                <thead>
                  <tr><Th $center>Action</Th></tr>
                  <tr><FilterCell /></tr>
                </thead>
              </Table>
              <PinnedClip>
                <Table $w={68}>
                  <tbody>
                    {rows.map(r => (
                      <Tr key={r[0]}><Td $icon><button aria-label={`Zoom to ${r[2]}`}><ZoomIcon /></button></Td></Tr>
                    ))}
                  </tbody>
                </Table>
                <VThumb />
              </PinnedClip>
              <PinnedTrack><Arrow left pale /><i /><Arrow pale /></PinnedTrack>
            </Pinned>
          </GridBody>
          <WinFoot>
            <span>Items per Page: 200</span>
            <Entries>1 - 35 of 35 entries</Entries>
            <Pager><button>PREV</button><span>1</span><button>NEXT</button></Pager>
          </WinFoot>
        </Win>
      </MapArea>
    </Page>
  );
}
